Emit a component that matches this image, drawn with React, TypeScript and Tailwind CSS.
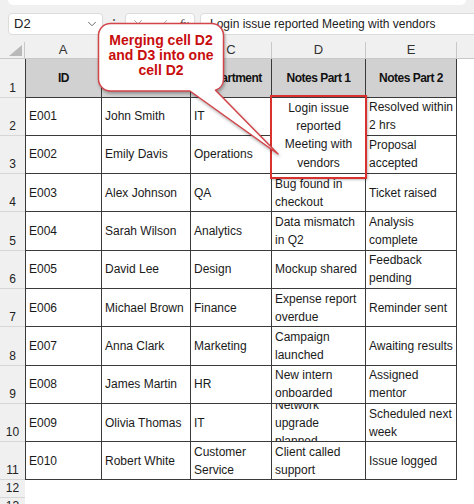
import { ChevronDown, X, Check } from "lucide-react";

type Row = {
  n: number;
  id: string;
  name: string;
  dept: string[];
  notes1?: string[];
  notes2: string[];
};

const rows: Row[] = [
  { n: 2, id: "E001", name: "John Smith", dept: ["IT"], notes2: ["Resolved within", "2 hrs"] },
  { n: 3, id: "E002", name: "Emily Davis", dept: ["Operations"], notes2: ["Proposal", "accepted"] },
  { n: 4, id: "E003", name: "Alex Johnson", dept: ["QA"], notes1: ["Bug found in", "checkout"], notes2: ["Ticket raised"] },
  { n: 5, id: "E004", name: "Sarah Wilson", dept: ["Analytics"], notes1: ["Data mismatch", "in Q2"], notes2: ["Analysis", "complete"] },
  { n: 6, id: "E005", name: "David Lee", dept: ["Design"], notes1: ["Mockup shared"], notes2: ["Feedback", "pending"] },
  { n: 7, id: "E006", name: "Michael Brown", dept: ["Finance"], notes1: ["Expense report", "overdue"], notes2: ["Reminder sent"] },
  { n: 8, id: "E007", name: "Anna Clark", dept: ["Marketing"], notes1: ["Campaign", "launched"], notes2: ["Awaiting results"] },
  { n: 9, id: "E008", name: "James Martin", dept: ["HR"], notes1: ["New intern", "onboarded"], notes2: ["Assigned", "mentor"] },
  { n: 10, id: "E009", name: "Olivia Thomas", dept: ["IT"], notes1: ["Network", "upgrade", "planned"], notes2: ["Scheduled next", "week"] },
  { n: 11, id: "E010", name: "Robert White", dept: ["Customer", "Service"], notes1: ["Client called", "support"], notes2: ["Issue logged"] },
];

const headers = ["ID", "Name", "Department", "Notes Part 1", "Notes Part 2"];

function RowHead({ n }: { n: number | string }) {
  return (
    <div className="flex items-end justify-center border-b border-[#d6d6d6] bg-[#f0f0f0] pb-[2px] text-[12px] leading-[14px] text-[#222]">
      {n}
    </div>
  );
}

function Cell({ lines, first, center }: { lines: string[]; first?: boolean; center?: boolean }) {
  return (
    <div
      className={`flex flex-col justify-center overflow-hidden border-r border-b border-[#3a3a3a] bg-white px-[3px] text-[12px] leading-[18px] text-[#1a1a1a] ${
        first ? "border-l" : ""
      } ${center ? "items-center text-center" : ""}`}
    >
      {lines.map((l, i) => (
        <span key={i} className="whitespace-nowrap">
          {l}
        </span>
      ))}
    </div>
  );
}

export default function App() {
  return (
    <div className="relative h-[504px] w-[474px] overflow-hidden bg-[#f0f0f0] font-['Liberation_Sans',Arial,sans-serif]">
      {/* formula bar */}
      <div className="mx-2 h-[5px] rounded-b-md bg-white" />
      <div className="mt-[8px] flex h-[22px] items-center">
        <div className="ml-2 flex h-full w-[95px] items-center justify-between rounded-[4px] border border-[#dcdcdc] bg-white pl-[5px] pr-[3px] text-[13px] text-[#222]">
          D2
          <ChevronDown className="h-3.5 w-3.5 text-[#555]" strokeWidth={1.5} />
        </div>
        <div className="w-[22px] text-center text-[14px] leading-none text-[#555]">⋮</div>
        <div className="flex h-full w-[70px] items-center justify-around rounded-[4px] border border-[#dcdcdc] bg-white text-[#999]">
          <X className="h-3.5 w-3.5" strokeWidth={1.5} />
          <Check className="h-3.5 w-3.5" strokeWidth={1.5} />
          <span className="font-['Liberation_Serif',serif] text-[13px] italic text-[#444]">fx</span>
        </div>
        <div className="-mr-2 ml-[5px] flex h-full flex-1 items-center rounded-l-[4px] border border-[#dcdcdc] bg-white pl-[9px] text-[12px] text-[#222]">
          Login issue reported Meeting with vendors
        </div>
      </div>

      {/* sheet */}
      <div className="mt-[7px] grid grid-cols-[25px_77px_89px_81px_94px_91px_1fr] grid-rows-[17px_38.5px_repeat(10,38.3px)_18px_18px] bg-white">
        {/* column headers */}
        <div className="relative border-r border-b border-[#c8c8c8] bg-[#f0f0f0]">
          <div className="absolute bottom-[2px] right-[2px] h-0 w-0 border-b-[11px] border-l-[13px] border-b-[#b9b9b9] border-l-transparent" />
        </div>
        {["A", "B", "C", "D", "E"].map((c) => (
          <div
            key={c}
            className="flex items-center justify-center border-r border-b border-[#c8c8c8] bg-[#f0f0f0] text-[13px] text-[#333]"
          >
            {c}
          </div>
        ))}
        <div className="border-b border-[#c8c8c8] bg-[#f0f0f0]" />

        {/* row 1 headers */}
        <RowHead n={1} />
        {headers.map((h, i) => (
          <div
            key={h}
            className={`flex items-center justify-center border-r border-b border-[#3a3a3a] bg-[#d1d1d1] text-[12px] font-bold tracking-[-0.5px] text-[#111] ${
              i === 0 ? "border-l" : ""
            }`}
          >
            {h}
          </div>
        ))}
        <div className="bg-white" />

        {rows.map((r) => (
          <div key={r.n} className="contents">
            <RowHead n={r.n} />
            <Cell lines={[r.id]} first />
            <Cell lines={[r.name]} />
            <Cell lines={r.dept} />
            {r.n === 2 && (
              <div className="row-span-2 flex flex-col items-center justify-center border-r border-b border-[#3a3a3a] bg-white text-center text-[12px] leading-[18.3px] text-[#1a1a1a]">
                <span>Login issue</span>
                <span>reported</span>
                <span>Meeting with</span>
                <span>vendors</span>
              </div>
            )}
            {r.notes1 && <Cell lines={r.notes1} />}
            <Cell lines={r.notes2} />
            <div className="bg-white" />
          </div>
        ))}

        <RowHead n={12} />
        <div className="col-span-6 bg-white" />
        <RowHead n={13} />
        <div className="col-span-6 bg-white" />
      </div>

      {/* merged cell highlight */}
      <div className="absolute left-[270px] top-[95px] h-[84px] w-[97px] border-2 border-[#d8312f] shadow-[1px_1px_2px_rgba(0,0,0,0.25)]" />

      {/* callout */}
      <svg
        className="pointer-events-none absolute left-0 top-0 drop-shadow-[1px_2px_1.5px_rgba(0,0,0,0.3)]"
        width="474"
        height="200"
      >
        <path
          d="M110.5 23.5 H211.5 A12 12 0 0 1 223.5 35.5 V79 A12 12 0 0 1 215.5 90.3 L278 154 L190 91 H110.5 A12 12 0 0 1 98.5 79 V35.5 A12 12 0 0 1 110.5 23.5 Z"
          fill="white"
          stroke="#d2454a"
          strokeWidth="1.5"
          strokeLinejoin="round"
        />
      </svg>
      <div className="pointer-events-none absolute left-[98px] top-[33px] flex w-[126px] flex-col items-center text-[14px] font-bold leading-[15px] text-[#c80d0d]">
        <span>Merging cell D2</span>
        <span>and D3 into one</span>
        <span>cell D2</span>
      </div>
    </div>
  );
}
